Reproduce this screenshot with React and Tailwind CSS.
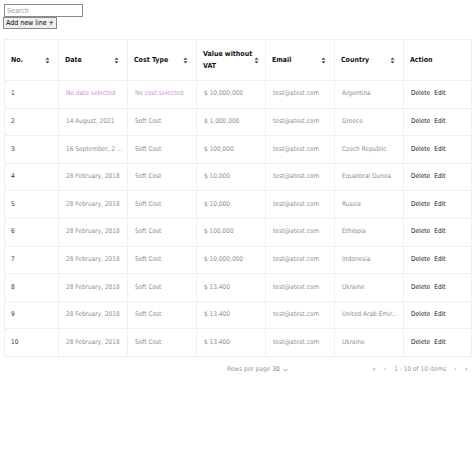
import React from "react";

const ROWS = [
  { no: 1, date: null, cost: null, value: "$ 10,000,000", country: "Argentina" },
  { no: 2, date: "14 August, 2021", cost: "Soft Cost", value: "$ 1,000,000", country: "Greece" },
  { no: 3, date: "16 September, 2 ...", cost: "Soft Cost", value: "$ 100,000", country: "Czech Republic" },
  { no: 4, date: "28 February, 2018", cost: "Soft Cost", value: "$ 10,000", country: "Equatoral Gunea" },
  { no: 5, date: "28 February, 2018", cost: "Soft Cost", value: "$ 10,000", country: "Russia" },
  { no: 6, date: "28 February, 2018", cost: "Soft Cost", value: "$ 100,000", country: "Ethiopia" },
  { no: 7, date: "28 February, 2018", cost: "Soft Cost", value: "$ 10,000,000", country: "Indonesia" },
  { no: 8, date: "28 February, 2018", cost: "Soft Cost", value: "$ 13,400", country: "Ukraine" },
  { no: 9, date: "28 February, 2018", cost: "Soft Cost", value: "$ 13,400", country: "United Arab Emir..." },
  { no: 10, date: "28 February, 2018", cost: "Soft Cost", value: "$ 13,400", country: "Ukraine" },
];

const COLUMNS = [
  { label: "No.", width: "w-[54px]", sort: true },
  { label: "Date", width: "w-[69px]", sort: true },
  { label: "Cost Type", width: "w-[69px]", sort: true },
  { label: <>Value without<br />VAT</>, key: "value", width: "w-[69px]", sort: true },
  { label: "Email", width: "w-[69px]", sort: true },
  { label: "Country", width: "w-[69px]", sort: true },
  { label: "Action", width: "w-[68px]", sort: false },
];

const SortIcon = () => (
  <svg width="5" height="7" viewBox="0 0 5 7" className="shrink-0">
    <path d="M2.5 0.5 L4.5 2.8 L0.5 2.8 Z" fill="#444" />
    <path d="M2.5 6.5 L4.5 4.2 L0.5 4.2 Z" fill="#444" />
  </svg>
);

export default function App() {
  return (
    <div
      className="w-[474px] h-[475px] bg-white text-[6.5px] text-[#333]"
      style={{ fontFamily: "'DejaVu Sans Condensed', 'DejaVu Sans', Verdana, sans-serif" }}
    >
      <div className="pt-[4px] pl-[4px]">
        <input
          placeholder="Search"
          className="block w-[79px] h-[13px] border border-[#8a8a8a] px-[2px] text-[7px] placeholder:text-[#999] outline-none"
        />
      </div>
      <div className="pl-[3px]">
        <button className="h-[12px] px-[2px] border border-[#8a8a8a] bg-[#efefef] text-[7px] leading-none text-black">
          Add new line +
        </button>
      </div>

      <div className="mt-[10px] mx-[4px]">
        <table className="table-fixed border-collapse w-[467px]">
          <thead>
            <tr className="h-[41px]">
              {COLUMNS.map((c) => (
                <th key={c.key || c.label} className={`${c.width} border border-[#f0f0f0] pl-[6px] pr-[8px] text-left align-middle font-bold text-[7px] text-[#111]`}>
                  <div className="flex items-center justify-between gap-[2px] leading-[12px] whitespace-nowrap">
                    <span>{c.label}</span>
                    {c.sort && <SortIcon />}
                  </div>
                </th>
              ))}
            </tr>
          </thead>
          <tbody>
            {ROWS.map((r) => (
              <tr key={r.no} className="h-[27.6px]">
                <td className="border border-[#f0f0f0] px-[6px] text-[#333]">{r.no}</td>
                <td className={`border border-[#f0f0f0] px-[7px] whitespace-nowrap overflow-hidden ${r.date ? "text-[#8f8f8f]" : "text-[#c994d4]"}`}>
                  {r.date || "No date selected"}
                </td>
                <td className={`border border-[#f0f0f0] px-[7px] whitespace-nowrap overflow-hidden ${r.cost ? "text-[#8f8f8f]" : "text-[#c994d4]"}`}>
                  {r.cost || "No cost selected"}
                </td>
                <td className="border border-[#f0f0f0] px-[7px] text-[#8f8f8f] whitespace-nowrap">{r.value}</td>
                <td className="border border-[#f0f0f0] px-[7px] text-[#8f8f8f] whitespace-nowrap">test@atest.com</td>
                <td className="border border-[#f0f0f0] px-[7px] text-[#8f8f8f] whitespace-nowrap overflow-hidden">{r.country}</td>
                <td className="border border-[#f0f0f0] px-[7px] text-[#111] whitespace-nowrap">
                  <span className="mr-[4px]">Delete</span>
                  <span>Edit</span>
                </td>
              </tr>
            ))}
          </tbody>
        </table>
      </div>

      <div className="flex items-center mt-[8px] text-[6.5px] text-[#999]">
        <div className="ml-[227px] flex items-center gap-[2px]">
          <span>Rows per page</span>
          <span className="flex items-center gap-[3px] text-[#777]">
            30
            <svg width="5" height="4" viewBox="0 0 5 4"><path d="M0.5 1 L2.5 3 L4.5 1" stroke="#777" fill="none" strokeWidth="0.8" /></svg>
          </span>
        </div>
        <div className="ml-auto mr-[6px] flex items-center gap-[8px]">
          <span>«</span>
          <span>‹</span>
          <span>1 - 10 of 10 items</span>
          <span>›</span>
          <span>»</span>
        </div>
      </div>
    </div>
  );
}
